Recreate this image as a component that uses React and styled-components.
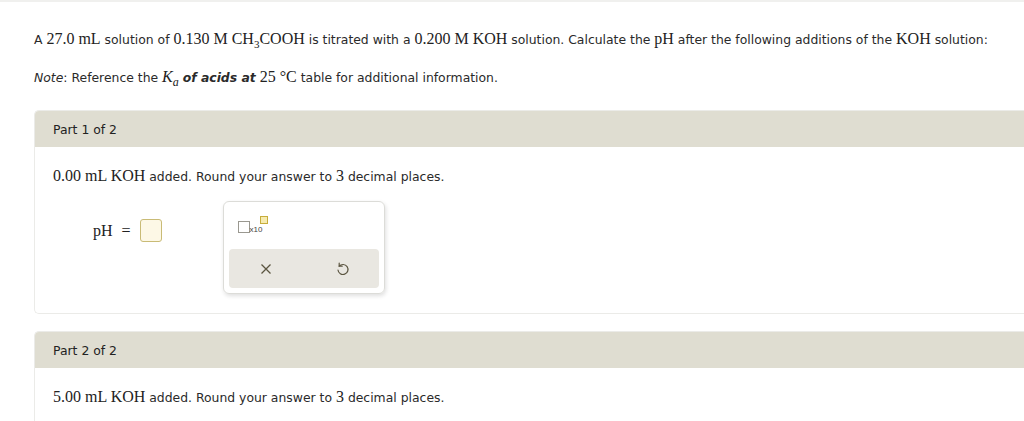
import React from "react";
import styled, { createGlobalStyle } from "styled-components";

const Global = createGlobalStyle`
  html, body {
    margin: 0;
    padding: 0;
    background: #ffffff;
    overflow: hidden;
  }
  body {
    font-family: "DejaVu Sans", Verdana, sans-serif;
    color: #2a2a2a;
    border-top: 2px solid #f0f0ee;
  }
`;

const Page = styled.div`
  padding: 26px 0 0 34px;
  width: 1040px;
`;

const Line = styled.p`
  margin: 0;
  font-size: 12.4px;
  line-height: 22px;
  height: 22px;
  white-space: nowrap;
  margin-bottom: ${(p) => p.$gap || 0}px;
`;

const M = styled.span`
  font-family: "Liberation Serif", "Times New Roman", serif;
  font-size: 16px;
  color: #222;
`;

const Sub = styled.sub`
  font-size: ${(p) => p.$size || 11}px;
  line-height: 0;
`;

const Ital = styled.i`
  font-style: italic;
`;

const BoldItal = styled.b`
  font-style: italic;
  font-weight: bold;
`;

const Card = styled.section`
  border: 1px solid #ebebe8;
  border-right: none;
  border-radius: 5px 0 0 5px;
  margin-bottom: 17px;
  background: #fff;
`;

const CardHeader = styled.div`
  background: #dfddd1;
  height: 36px;
  display: flex;
  align-items: center;
  padding-left: 18px;
  font-size: 12.4px;
  border-radius: 4px 0 0 0;
  color: #222;
`;

const CardBody = styled.div`
  padding: 18px 18px 19px;
`;

const AnswerRow = styled.div`
  display: flex;
  align-items: flex-start;
  margin: 14px 0 0 40px;
`;

const Equation = styled.div`
  display: flex;
  align-items: center;
  margin-top: 18px;
  gap: 9px;
`;

const InputBox = styled.div`
  width: 20px;
  height: 21px;
  background: #fdf8e6;
  border: 1px solid #c9bb76;
  border-radius: 3px;
`;

const Palette = styled.div`
  margin-left: 61px;
  width: 150px;
  height: 86px;
  border: 1px solid #dcdcd8;
  border-radius: 6px;
  box-shadow: 1px 2px 4px rgba(0, 0, 0, 0.13);
  display: flex;
  flex-direction: column;
  padding: 0 5px 5px;
  box-sizing: content-box;
`;

const Sci = styled.div`
  height: 47px;
  display: flex;
  align-items: flex-start;
  padding: 13px 0 0 9px;
  box-sizing: border-box;
`;

const Box = styled.span`
  display: inline-block;
  width: ${(p) => p.$size}px;
  height: ${(p) => p.$size}px;
  border: 1px solid ${(p) => p.$border};
  background: ${(p) => p.$bg};
  margin-top: ${(p) => p.$top || 0}px;
`;

const Times = styled.span`
  font-family: "Liberation Sans", Arial, sans-serif;
  font-size: 8px;
  color: #444;
  margin-top: 10px;
  margin-right: -3px;
`;

const ButtonBar = styled.div`
  flex: 1;
  background: #e9e7e1;
  border-radius: 4px;
  display: flex;
  align-items: center;
  justify-content: space-between;
  padding: 0 29px;
`;

const IconButton = styled.span`
  display: flex;
  width: 16px;
  height: 16px;
  color: #5b5540;
`;

const Part = ({ n, children }) => (
  <Card>
    <CardHeader>Part {n} of 2</CardHeader>
    <CardBody>{children}</CardBody>
  </Card>
);

export default function App() {
  return (
    <>
      <Global />
      <Page>
        <Line $gap={16}>
          A <M>27.0 mL</M> solution of <M>0.130 M CH<Sub>3</Sub>COOH</M> is
          titrated with a <M>0.200 M KOH</M> solution. Calculate the <M>pH</M> after the following
          additions of the <M>KOH</M> solution:
        </Line>
        <Line $gap={22}>
          <Ital>Note</Ital>: Reference the{" "}
          <M>
            <Ital>K</Ital>
            <Sub $size={12}><Ital>a</Ital></Sub>
          </M>{" "}
          <BoldItal>of acids at</BoldItal> <M>25 °C</M> table for additional information.
        </Line>

        <Part n={1}>
          <Line>
            <M>0.00 mL KOH</M> added. Round your answer to <M>3</M> decimal places.
          </Line>
          <AnswerRow>
            <Equation>
              <M>pH</M>
              <M>=</M>
              <InputBox />
            </Equation>
            <Palette>
              <Sci>
                <Box $size={10} $border="#9a9890" $bg="#fff" $top={6} />
                <Times>x10</Times>
                <Box $size={6} $border="#c7ad3c" $bg="#f6ebb0" $top={1} />
              </Sci>
              <ButtonBar>
                <IconButton>
                  <svg viewBox="0 0 16 16" width="16" height="16" fill="none" stroke="currentColor" strokeWidth="1.3">
                    <path d="M3.5 3.5l9 9M12.5 3.5l-9 9" />
                  </svg>
                </IconButton>
                <IconButton>
                  <svg viewBox="0 0 16 16" width="16" height="16" fill="none" stroke="currentColor" strokeWidth="1.2" strokeLinecap="round">
                    <path d="M5.2 5.2A5 5 0 1 1 4 9" />
                    <path d="M5.2 2.2v3h3" />
                  </svg>
                </IconButton>
              </ButtonBar>
            </Palette>
          </AnswerRow>
        </Part>

        <Part n={2}>
          <Line>
            <M>5.00 mL KOH</M> added. Round your answer to <M>3</M> decimal places.
          </Line>
        </Part>
      </Page>
    </>
  );
}
